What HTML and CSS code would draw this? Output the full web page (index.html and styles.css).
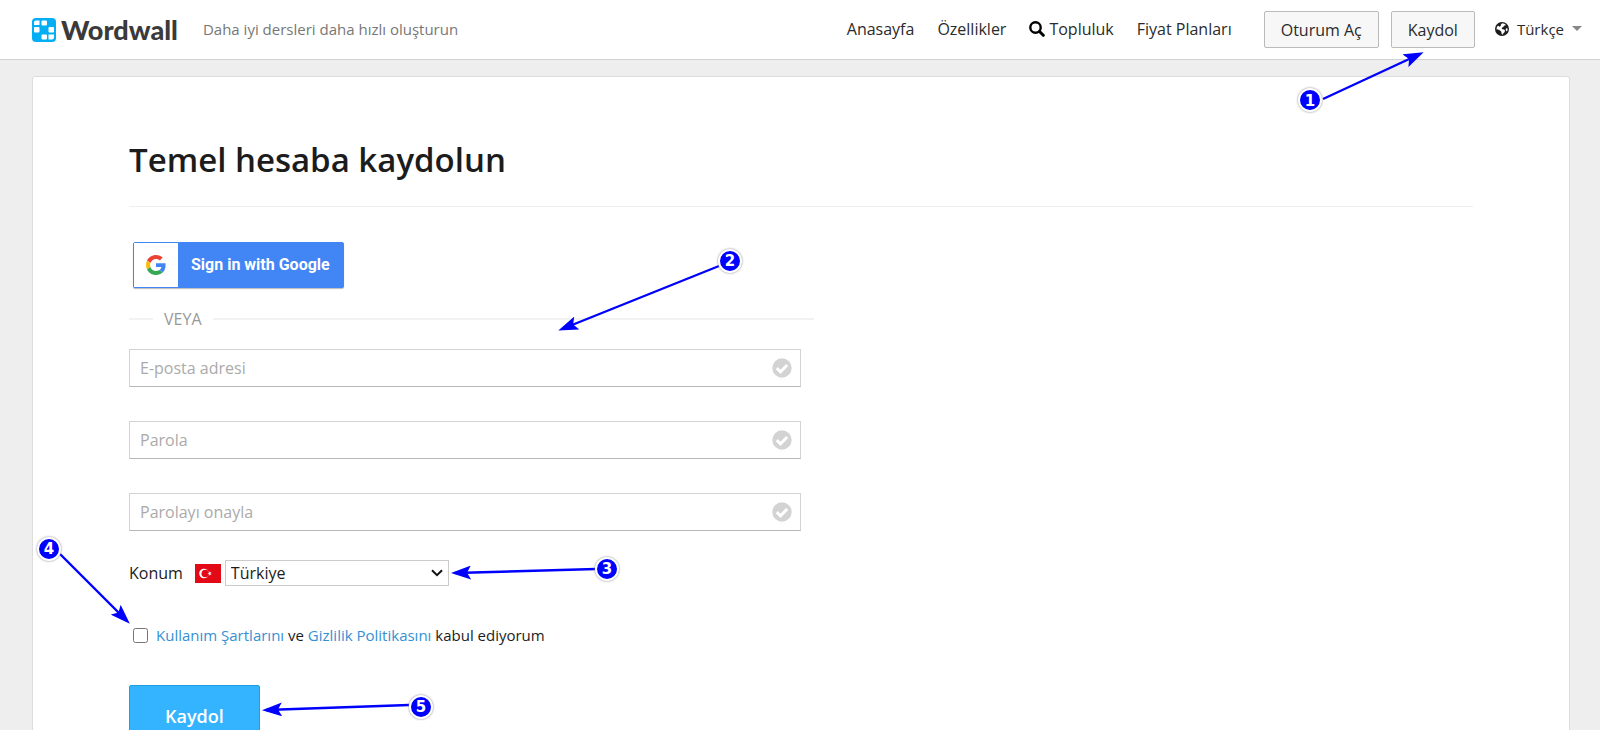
FILE: index.html
```html
<!DOCTYPE html>
<html lang="tr">
<head>
<meta charset="utf-8">
<title>Temel hesaba kaydolun - Wordwall</title>
<link rel="stylesheet" href="styles.css">
</head>
<body>
<header class="header">
  <a class="brand" href="#">
    <svg class="brand-mark" viewBox="0 0 24 24" aria-hidden="true">
      <rect width="24" height="24" rx="4" fill="#04aef4"/>
      <g fill="#fff">
        <path d="M4 2.500h3.500v4.500h-5.500v-2.500q0-2 2-2z"/>
        <rect x="9.500" y="2.500" width="5.500" height="5" rx="1"/>
        <rect x="2" y="9" width="5.500" height="5.500" rx="1"/>
        <rect x="16.500" y="9" width="5.500" height="5.500" rx="1"/>
        <rect x="9.500" y="16.500" width="5.500" height="5" rx="1"/>
        <path d="M16.500 16.500h5.500v3q0 2-2 2h-3.500z"/>
      </g>
    </svg>
    <span class="brand-name">Wordwall</span>
  </a>
  <span class="tagline">Daha iyi dersleri daha hızlı oluşturun</span>
  <nav class="nav">
    <a href="#">Anasayfa</a>
    <a href="#">Özellikler</a>
    <a href="#" class="nav-search">
      <svg viewBox="0 0 16 16" width="16" height="16" aria-hidden="true"><circle cx="6.500" cy="6.500" r="5.200" fill="none" stroke="#000" stroke-width="2.400"/><path d="M10.500 10.500l3.800 3.800" stroke="#000" stroke-width="3" stroke-linecap="round"/></svg>
      Topluluk</a>
    <a href="#">Fiyat Planları</a>
  </nav>
  <div class="account">
    <button type="button" class="btn">Oturum Aç</button>
    <button type="button" class="btn">Kaydol</button>
  </div>
  <button type="button" class="language">
    <svg viewBox="0 0 14 14" width="14" height="14" aria-hidden="true"><circle cx="7" cy="7" r="7" fill="#1c1c1c"/><path d="M7.200 1.300l2.200.4 1.600 1.200-1 .6-1.200.2-.3 1.200-1.400.6-.4 1.200.9.500 1.500.4 1 1.200-.8 1.700-1.300 1.300-.9 1.300-.6-1.900-.3-1.800-1.500-1.100-2.300-1-.9.300.2-1.900 1-1.900 1.300.3.600.8 1.300-1.300-.2-.9z" fill="#fff"/><path d="M11 6.200l1.600.3-.1 1.900-.8 1.100-1-1.400z" fill="#fff"/></svg>
    <span>Türkçe</span>
    <span class="caret"></span>
  </button>
</header>

<main class="card">
  <h1 class="title">Temel hesaba kaydolun</h1>
  <form class="form">
    <button type="button" class="google">
      <span class="google-mark">
        <svg viewBox="0 0 48 48" width="20" height="20" aria-hidden="true"><path fill="#EA4335" d="M24 9.500c3.540 0 6.710 1.220 9.210 3.600l6.850-6.850C35.900 2.380 30.470 0 24 0 14.620 0 6.510 5.380 2.560 13.220l7.980 6.190C12.430 13.720 17.740 9.500 24 9.500z"/><path fill="#4285F4" d="M46.980 24.550c0-1.570-.15-3.090-.38-4.550H24v9.020h12.940c-.58 2.960-2.260 5.480-4.780 7.180l7.730 6c4.510-4.180 7.090-10.360 7.090-17.650z"/><path fill="#FBBC05" d="M10.530 28.590c-.48-1.450-.76-2.990-.76-4.590s.27-3.140.76-4.590l-7.980-6.190C.92 16.460 0 20.120 0 24c0 3.880.92 7.540 2.560 10.780l7.970-6.190z"/><path fill="#34A853" d="M24 48c6.480 0 11.930-2.130 15.890-5.810l-7.730-6c-2.150 1.450-4.920 2.300-8.160 2.300-6.260 0-11.570-4.220-13.470-9.910l-7.980 6.190C6.510 42.620 14.620 48 24 48z"/></svg>
      </span>
      <span class="google-label">Sign in with Google</span>
    </button>
    <div class="divider">VEYA</div>
    <div class="field">
      <input type="email" placeholder="E-posta adresi" aria-label="E-posta adresi">
      <svg class="tick" viewBox="0 0 20 20" aria-hidden="true"><circle cx="10" cy="10" r="9.700" fill="#d3d3d3"/><path d="M4.800 10.200l3.700 3.600 6.700-6.800" fill="none" stroke="#fff" stroke-width="3"/></svg>
    </div>
    <div class="field">
      <input type="password" placeholder="Parola" aria-label="Parola">
      <svg class="tick" viewBox="0 0 20 20" aria-hidden="true"><circle cx="10" cy="10" r="9.700" fill="#d3d3d3"/><path d="M4.800 10.200l3.700 3.600 6.700-6.800" fill="none" stroke="#fff" stroke-width="3"/></svg>
    </div>
    <div class="field">
      <input type="password" placeholder="Parolayı onayla" aria-label="Parolayı onayla">
      <svg class="tick" viewBox="0 0 20 20" aria-hidden="true"><circle cx="10" cy="10" r="9.700" fill="#d3d3d3"/><path d="M4.800 10.200l3.700 3.600 6.700-6.800" fill="none" stroke="#fff" stroke-width="3"/></svg>
    </div>
    <div class="location">
      <label for="country">Konum</label>
      <svg class="flag" viewBox="0 0 26 19" aria-hidden="true"><rect width="26" height="19" fill="#e30a17"/><circle cx="9" cy="9.500" r="4.800" fill="#fff"/><circle cx="10.300" cy="9.500" r="3.800" fill="#e30a17"/><path d="M12.300 9.500l1.600-.5v-1.700l1 1.300 1.600-.5-1 1.400 1 1.400-1.600-.5-1 1.300v-1.700z" fill="#fff"/></svg>
      <span class="select">
        <select id="country"><option>Türkiye</option></select>
        <svg class="chevron" viewBox="0 0 12 8" aria-hidden="true"><path d="M1 1.200l5 5 5-5" fill="none" stroke="#111" stroke-width="2"/></svg>
      </span>
    </div>
    <div class="terms">
      <input type="checkbox" id="terms">
      <label for="terms"><a href="#">Kullanım Şartlarını</a> ve <a href="#">Gizlilik Politikasını</a> kabul ediyorum</label>
    </div>
    <button type="submit" class="submit">Kaydol</button>
  </form>
</main>

<svg class="notes" width="1600" height="730" aria-hidden="true">
  <defs>
    <marker id="head" markerUnits="userSpaceOnUse" markerWidth="20" markerHeight="14" refX="16" refY="7" orient="auto"><path d="M20 7L0 0l4 7-4 7z" fill="#00f"/></marker>
  </defs>
  <g class="note-line" stroke-width="2.400">
    <path d="M1323 99L1420 54"/>
    <path d="M719 266L562 329"/>
    <path d="M596 569L455 573"/>
    <path d="M60 554L127 621"/>
    <path d="M409 705L266 710"/>
  </g>
  <g class="note-dot">
    <circle cx="1310" cy="100" r="11"/>
    <circle cx="730" cy="261" r="11"/>
    <circle cx="607" cy="569" r="11"/>
    <circle cx="49" cy="549" r="11"/>
    <circle cx="421" cy="707" r="11"/>
  </g>
  <g class="note-text">
    <text x="1310" y="106">1</text>
    <text x="730" y="266">2</text>
    <text x="607" y="574">3</text>
    <text x="49" y="554">4</text>
    <text x="421" y="712">5</text>
  </g>
</svg>
</body>
</html>
```

FILE: styles.css
```css
* { box-sizing: border-box; }

body {
  margin: 0;
  position: relative;
  background: #eee;
  color: #1c1c1c;
  font: 16px/24px "Open Sans", "Noto Sans", sans-serif;
}

button, input, select { font: inherit; color: inherit; }
a { color: inherit; text-decoration: none; }

.header {
  display: flex;
  align-items: center;
  height: 60px;
  padding: 0 18px 2px 32px;
  background: #fff;
  border-bottom: 1px solid #d2d2d2;
  white-space: nowrap;
}

.brand { display: flex; align-items: center; gap: 5px; padding-top: 2px; color: #3a3a3a; }
.brand-mark { width: 24px; height: 24px; }
.brand-name { font: 900 27px/28px Lato, sans-serif; }
.tagline { margin-left: 25px; color: #777; font-size: 15px; }

.nav { display: flex; gap: 23px; margin-left: auto; color: #2b2b2b; }
.nav-search { display: flex; align-items: center; gap: 4px; }

.account { display: flex; gap: 12px; margin-left: 32px; padding-top: 2px; }
.btn {
  height: 37px;
  padding: 0 16px;
  background: #f7f7f7;
  border: 1px solid #bbb;
  border-radius: 2px;
  color: #2b2b2b;
}

.language {
  display: flex;
  align-items: center;
  gap: 8px;
  margin-left: 20px;
  padding: 0;
  border: 0;
  background: none;
  color: #2b2b2b;
  font-size: 15px;
}
.caret { border: 5px solid transparent; border-top-color: #888; border-bottom: 0; }

.card {
  margin: 16px 30px 0 32px;
  padding: 59px 96px 40px;
  background: #fff;
  border: 1px solid #ddd;
  border-radius: 3px;
}

.title {
  margin: 0;
  padding-bottom: 22px;
  border-bottom: 1px solid #eee;
  font-size: 33px;
  font-weight: 600;
  line-height: 48px;
}

.form { width: 50%; padding-top: 35px; }

.google {
  display: flex;
  align-items: center;
  height: 46px;
  margin: 0 4px;
  padding: 0;
  background: #4285f4;
  border: 1px solid #4285f4;
  border-radius: 2px;
  box-shadow: 0 1px 1px #bbb;
  color: #fff;
  font: 700 16px/20px Roboto, sans-serif;
}
.google-mark {
  display: grid;
  place-items: center;
  width: 44px;
  height: 44px;
  background: #fff;
}
.google-label { padding: 0 13px; }

.divider {
  display: flex;
  align-items: center;
  gap: 11px;
  width: 102%;
  margin: 19px 0 18px;
  color: #999;
}
.divider::before, .divider::after { content: ""; height: 2px; background: #f2f2f2; }
.divider::before { width: 24px; }
.divider::after { flex: 1; }

.field { position: relative; margin-bottom: 34px; }
.field input {
  display: block;
  width: 100%;
  height: 38px;
  padding: 0 10px;
  background: #fff;
  border: 1px solid #d3d3d3;
  border-bottom-color: #b8b8b8;
}
.field input::placeholder { color: #aaa; opacity: 1; }
.tick { position: absolute; top: 9px; right: 9px; width: 20px; height: 20px; }

.location { display: flex; align-items: center; margin-top: -5px; }
.flag { width: 26px; height: 19px; margin: 0 4px 0 12px; }
.select { position: relative; width: 224px; }
.select select {
  display: block;
  appearance: none;
  width: 100%;
  height: 26px;
  padding: 0 5px;
  background: #fff;
  border: 1px solid #ccc;
  border-radius: 0;
}
.chevron { position: absolute; top: 9px; right: 6px; width: 12px; height: 8px; pointer-events: none; }

.terms { display: flex; align-items: center; gap: 8px; margin: 37px 0 38px 4px; font-size: 15px; }
.terms input { width: 15px; height: 15px; margin: 0; }
.terms a { color: #3490d3; }

.submit {
  height: 62px;
  padding: 0 35px;
  background: #34b3ff;
  border: 1px solid #1f9fe6;
  border-radius: 2px;
  color: #fff;
  font-size: 18px;
  font-weight: 600;
}

.notes { position: absolute; top: 0; left: 0; pointer-events: none; }
.note-line { fill: none; stroke: #00f; }
.note-line path { marker-end: url(#head); }
.note-dot { fill: #00f; stroke: #fff; stroke-width: 2; filter: drop-shadow(0 0 1px #888); }
.note-text { fill: #fff; font: 700 15px "DejaVu Sans", sans-serif; text-anchor: middle; }
```
